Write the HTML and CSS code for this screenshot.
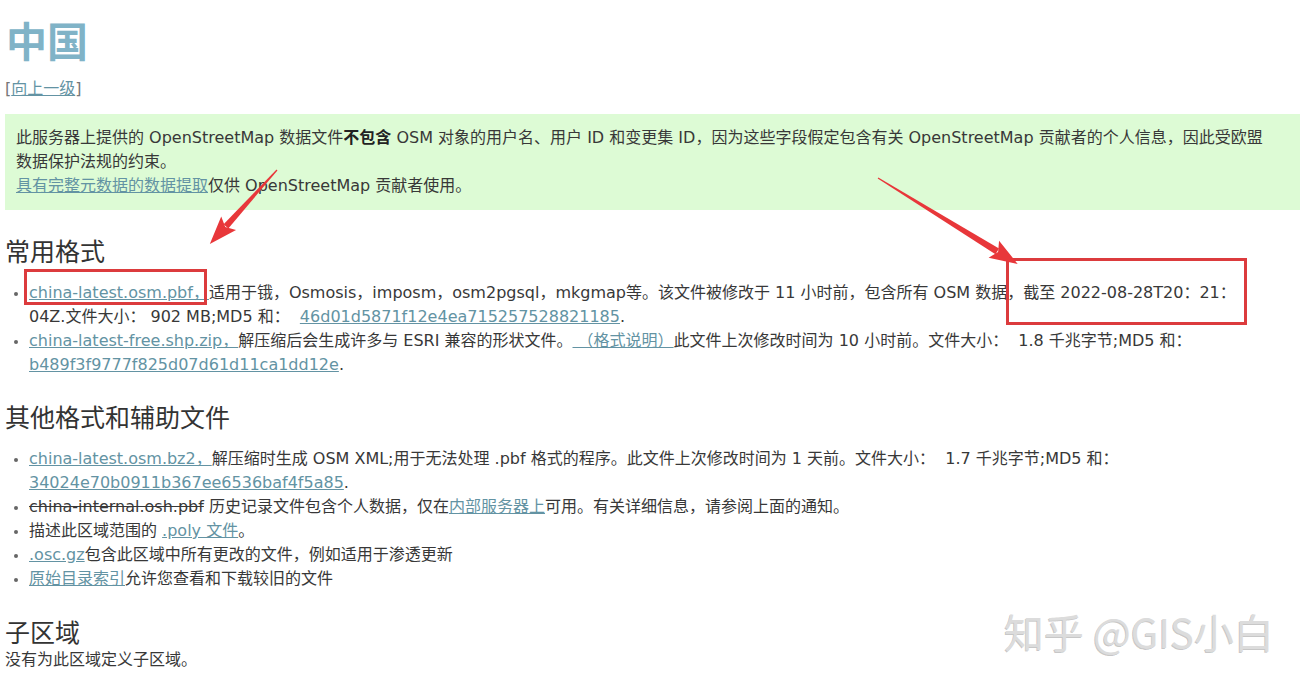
FILE: index.html
```html
<!DOCTYPE html>
<html lang="zh-CN">
<head>
    <meta charset="UTF-8">
    <title>中国 - 下载</title>
    <link rel="stylesheet" href="styles.css">
</head>
<body>
    <h1 class="pageTitle">中国</h1>
    <p class="upLink">[<a href="#">向上一级</a>]</p>

    <div class="notice">
        此服务器上提供的 OpenStreetMap 数据文件<b>不包含</b> OSM 对象的用户名、用户 ID 和变更集 ID，因为这些字段假定包含有关 OpenStreetMap 贡献者的个人信息，因此受欧盟<br>数据保护法规的约束。<br>
        <a href="#">具有完整元数据的数据提取</a>仅供 OpenStreetMap 贡献者使用。
    </div>

    <h2 class="sectionTitle">常用格式</h2>
    <ul class="fileList">
        <li><a href="#">china-latest.osm.pbf，</a>适用于锇，Osmosis，imposm，osm2pgsql，mkgmap等。该文件被修改于 11 小时前，包含所有 OSM 数据，截至 2022-08-28T20：21：<br>04Z.文件大小： 902 MB;MD5 和：&nbsp; <a href="#">46d01d5871f12e4ea715257528821185</a>.</li>
        <li><a href="#">china-latest-free.shp.zip，</a>解压缩后会生成许多与 ESRI 兼容的形状文件。<a href="#"> （格式说明）</a>此文件上次修改时间为 10 小时前。文件大小：&nbsp; 1.8 千兆字节;MD5 和： <a href="#">b489f3f9777f825d07d61d11ca1dd12e</a>.</li>
    </ul>

    <h2 class="sectionTitle">其他格式和辅助文件</h2>
    <ul class="fileList">
        <li><a href="#">china-latest.osm.bz2，</a>解压缩时生成 OSM XML;用于无法处理 .pbf 格式的程序。此文件上次修改时间为 1 天前。文件大小：&nbsp; 1.7 千兆字节;MD5 和： <a href="#">34024e70b0911b367ee6536baf4f5a85</a>.</li>
        <li><s>china-internal.osh.pbf</s> 历史记录文件包含个人数据，仅在<a href="#">内部服务器上</a>可用。有关详细信息，请参阅上面的通知。</li>
        <li>描述此区域范围的 <a href="#">.poly 文件</a>。</li>
        <li><a href="#">.osc.gz</a>包含此区域中所有更改的文件，例如适用于渗透更新</li>
        <li><a href="#">原始目录索引</a>允许您查看和下载较旧的文件</li>
    </ul>

    <h2 class="sectionTitle subTitle">子区域</h2>
    <p class="noSub">没有为此区域定义子区域。</p>

    <!-- 截图上的红色标注 -->
    <svg class="marks" width="1306" height="688" viewBox="0 0 1306 688">
        <rect x="25.5" y="270.5" width="180" height="33" fill="none" stroke="#dc3b3d" stroke-width="3"/>
        <rect x="1007.5" y="259.5" width="238" height="64" fill="none" stroke="#dc3b3d" stroke-width="3"/>
        <g fill="#e8373a" transform="translate(277 170) rotate(132.2)">
            <polygon points="0,-0.6 76,-3.2 76,3.2 0,0.6"/>
            <polygon points="72,-10 100,0 72,10 77,0"/>
        </g>
        <g fill="#e8373a" transform="translate(878 178) rotate(31.6)">
            <polygon points="0,-0.6 140,-3.4 140,3.4 0,0.6"/>
            <polygon points="136,-10 164,0 136,10 141,0"/>
        </g>
    </svg>
    <div class="watermark">知乎 @GIS小白</div>
</body>
</html>
```

FILE: styles.css
```css
body {
    margin: 0 6px 0 5px;
    font-family: "DejaVu Sans", "Noto Sans CJK SC", sans-serif;
    font-size: 16px;
    line-height: 24px;
    color: #383838;
    background: #fff;
}
a {
    color: #6393a3;
    text-decoration: underline;
}
.pageTitle {
    margin: 15px 0 14px 1px;
    font-family: "Noto Sans CJK SC", sans-serif;
    font-size: 41px;
    line-height: 48px;
    font-weight: bold;
    color: #80b3c7;
}
.upLink {
    margin: 0 0 13px 0;
    color: #777;
}
.notice {
    background: #ddfbd5;
    padding: 12px 13px 12px 12px;
    margin-left: -1px;
}
.notice b {
    font-weight: bold;
    color: #222;
}
.sectionTitle {
    margin: 25px 0 16px 0;
    font-family: "Noto Sans CJK SC", sans-serif;
    font-size: 25px;
    line-height: 30px;
    font-weight: normal;
    color: #333;
}
.fileList {
    margin: 0;
    padding-left: 24px;
    list-style: disc;
}
.fileList li::marker {
    color: #666;
    font-size: 13px;
}
.fileList + .sectionTitle {
    margin-top: 24px;
    margin-bottom: 16px;
}
.fileList + .subTitle {
    margin-top: 25px;
    margin-bottom: 2px;
}
.noSub {
    margin: 0;
}
.marks {
    position: absolute;
    top: 0;
    left: 0;
    pointer-events: none;
}
.watermark {
    position: absolute;
    top: 605px;
    left: 1004px;
    font-family: "Noto Sans CJK SC", sans-serif;
    font-size: 40px;
    line-height: 52px;
    color: #dcdcdc;
    text-shadow: -1px 1px 0 rgba(0, 0, 0, 0.22);
    white-space: nowrap;
}
```
